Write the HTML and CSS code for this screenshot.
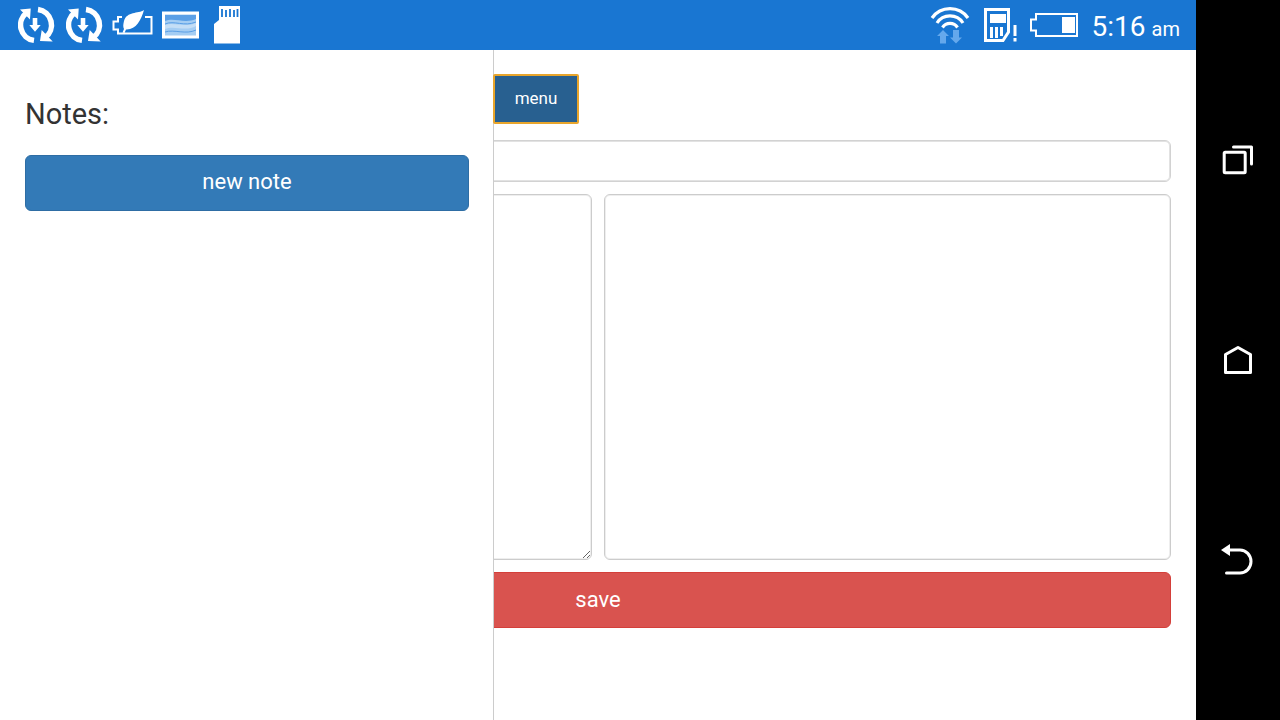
FILE: index.html
```html
<!DOCTYPE html>
<html lang="en">
<head>
<meta charset="utf-8">
<title>Notes</title>
<link rel="stylesheet" href="styles.css">
</head>
<body>
<div class="device">
  <div class="screen">
    <header class="statusbar">
      <svg class="cell w48" viewBox="0 0 48 50"><path class="line" d="M16 40.400A15.500 15.500 0 0 1 9 12.500"/><path class="solid" d="M2 9.500L12.700 8.500L12 19.500Z"/><path class="line" d="M20 9.600A15.500 15.500 0 0 1 27 37.600"/><path class="solid" d="M22 41L34.700 41.500L23.700 30Z"/><path class="solid" d="M14.700 18H19.300V25H22.700L17 31.700L11.300 25H14.700Z"/></svg>
      <svg class="cell w46" viewBox="0 0 46 50"><path class="line" d="M16 40.400A15.500 15.500 0 0 1 9 12.500"/><path class="solid" d="M2 9.500L12.700 8.500L12 19.500Z"/><path class="line" d="M20 9.600A15.500 15.500 0 0 1 27 37.600"/><path class="solid" d="M22 41L34.700 41.500L23.700 30Z"/><path class="solid" d="M14.700 18H19.300V25H22.700L17 31.700L11.300 25H14.700Z"/></svg>
      <svg class="cell w50" viewBox="0 0 50 50"><path class="thin" d="M10 17H6V21.500H1.500V29.500H6V33.500H39.500V17H33"/><path class="solid" d="M32 10C26 14 15 11 12 21C11 25 11 27 12 29L10.500 32.500L12.500 33L14 29.500C24 30 29 20 32 10Z"/></svg>
      <svg class="cell w52" viewBox="0 0 52 50"><rect class="frame" x="1.500" y="13" width="34" height="24"/><path class="wave" d="M3 21C12 17 22 24 34 19V15H3Z"/><path class="wave2" d="M3 29C12 25 24 32 34 26V23C22 28 12 22 3 25Z"/><path class="ripple" d="M3 24C12 20 22 27 34 22M3 32C12 29 24 35 34 30"/></svg>
      <svg class="cell w26" viewBox="0 0 26 50"><path class="solid" d="M5 6H26V43.500H0V24L5 20Z"/><path class="pins" d="M8 9V17M12 10V17M16 9V17M20 10V17M23.500 9V17"/></svg>
      <div class="status-right">
        <svg class="cell w54" viewBox="0 0 54 50"><path class="arc" d="M2 18A22 22 0 0 1 38 18"/><path class="arc" d="M7 23A15.500 15.500 0 0 1 33 23"/><path class="arc" d="M12.500 27.500A9 9 0 0 1 27.500 27.500"/><path class="dim" d="M13 30L19 36H16V43.500H10V36H7Z"/><path class="dim" d="M26 43.500L32 37.500H29V30H23V37.500H20Z"/></svg>
        <svg class="cell w46" viewBox="0 0 46 50"><path class="thin3" d="M1.500 9.500H24.500V32L19 40.500H1.500Z"/><rect class="solid" x="6" y="14" width="16" height="9"/><path class="thin3" d="M7.500 27V38M12.500 27V38M17.500 27V36"/><rect class="solid" x="29.500" y="25" width="3" height="11"/><rect class="solid" x="29.500" y="38" width="3" height="3.500"/></svg>
        <svg class="cell w64" viewBox="0 0 64 50"><path class="thin" d="M6 14H47V36H6V30.500H1V19.500H6Z"/><rect class="solid" x="32" y="17" width="13" height="16"/></svg>
        <div class="clock"><span class="time">5:16</span><span class="ampm">am</span></div>
      </div>
    </header>
    <div class="app">
      <aside class="drawer">
        <h3 class="drawer-title">Notes:</h3>
        <button class="btn btn-new" type="button"><span class="label">new note</span></button>
      </aside>
      <main class="content">
        <button class="btn btn-menu" type="button"><span class="label">menu</span></button>
        <input class="field" type="text">
        <div class="editors">
          <textarea class="field area"></textarea>
          <textarea class="field area fixed"></textarea>
        </div>
        <button class="btn btn-save" type="button"><span class="label">save</span></button>
      </main>
    </div>
  </div>
  <nav class="navbar">
    <div class="nav-item"><svg class="nav-icon" viewBox="0 0 40 40"><rect class="navline" x="6.200" y="12.200" width="21" height="20.500" rx="1"/><path class="navline" d="M15.500 7H33.500V24"/></svg></div>
    <div class="nav-item"><svg class="nav-icon" viewBox="0 0 40 40"><path class="navline" d="M7.500 14.500L20 7.500L32.500 14.500V32.500H7.500Z"/></svg></div>
    <div class="nav-item"><svg class="nav-icon" viewBox="0 0 40 40"><path class="navline" d="M11 10H22A11 11.500 0 0 1 22 33H8.500"/><path class="navfill" d="M3 10L12 4V16Z"/></svg></div>
  </nav>
</div>
</body>
</html>
```
FILE: styles.css
```css
* { box-sizing: border-box; }
html, body { margin: 0; padding: 0; }
body { width: 1280px; height: 720px; overflow: hidden; background: #000; font-family: Roboto, "Liberation Sans", sans-serif; }

.device { display: flex; width: 1280px; height: 720px; }
.screen { width: 1196px; display: flex; flex-direction: column; background: #fff; }
.navbar { width: 84px; background: #000; display: flex; flex-direction: column; padding: 60px 0; }
.nav-item { height: 200px; display: flex; align-items: center; justify-content: center; }
.nav-icon { width: 40px; height: 40px; display: block; }
.navline { fill: none; stroke: #fff; stroke-width: 3; stroke-linejoin: round; stroke-linecap: round; }
.navfill { fill: #fff; }

.statusbar { height: 50px; flex: none; background: #1976d2; display: flex; padding-left: 18px; color: #fff; }
.status-right { margin-left: auto; display: flex; }
.cell { height: 50px; flex: none; display: block; }
.w26 { width: 26px; } .w46 { width: 46px; } .w48 { width: 48px; } .w50 { width: 50px; } .w52 { width: 52px; } .w54 { width: 54px; } .w64 { width: 64px; }
.solid { fill: #fff; }
.line { fill: none; stroke: #fff; stroke-width: 5.500; }
.thin { fill: none; stroke: #fff; stroke-width: 2; }
.thin3 { fill: none; stroke: #fff; stroke-width: 3; }
.arc { fill: none; stroke: #fff; stroke-width: 3.200; }
.dim { fill: #64a8ec; }
.frame { fill: #a4cdf3; stroke: #fff; stroke-width: 3; }
.wave { fill: #5a9fe6; }
.wave2 { fill: #c4def6; }
.ripple { fill: none; stroke: #5a9fe6; stroke-width: 1; }
.pins { fill: none; stroke: #1976d2; stroke-width: 1.800; }
.clock { width: 102px; padding: 4px 16px 0 0; display: flex; justify-content: flex-end; align-items: baseline; line-height: 46px; white-space: nowrap; }
.time { font-size: 28px; font-weight: 400; }
.ampm { font-size: 20px; margin-left: 6px; }

.app { flex: 1; position: relative; min-height: 0; }
.drawer { position: absolute; left: 0; top: 0; bottom: 0; width: 494px; background: #fff; border-right: 1px solid #ccc; padding: 47px 25px 0; z-index: 1; display: flex; flex-direction: column; }
.drawer-title { margin: 0 0 23px; font-size: 29px; font-weight: 400; line-height: 35px; color: #333; }

.btn { font-family: Roboto, "Liberation Sans", sans-serif; color: #fff; display: block; padding: 0; }
.label { display: block; }
.btn-new { width: 444px; height: 56px; font-size: 22px; background: #337ab7; border: 1px solid #2e6da4; border-radius: 6px; padding-bottom: 4px; }
.content { height: 100%; padding: 24px 25px 0; display: flex; flex-direction: column; }
.btn-menu { position: relative; z-index: 2; margin-left: 468px; width: 86px; height: 50px; font-size: 17px; background: #286090; border: 2px solid #e8a52c; border-radius: 2px; padding-bottom: 2px; }
.field { display: block; width: 100%; border: 1px solid #ccc; border-radius: 6px; background: #fff; box-shadow: inset 0 0 0 1px #eee; }
input.field { height: 42px; margin-top: 16px; border-color: #d2d2d2; box-shadow: inset 0 0 0 1px #e2e2e2; }
.editors { margin-top: 12px; display: grid; grid-template-columns: 1fr 1fr; gap: 12px; height: 366px; }
.area { height: 366px; }
.fixed { resize: none; }
.btn-save { margin-top: 12px; width: 100%; height: 56px; font-size: 22px; background: #d9534f; border: 1px solid #d43f3a; border-radius: 6px; padding-bottom: 2px; }
```
